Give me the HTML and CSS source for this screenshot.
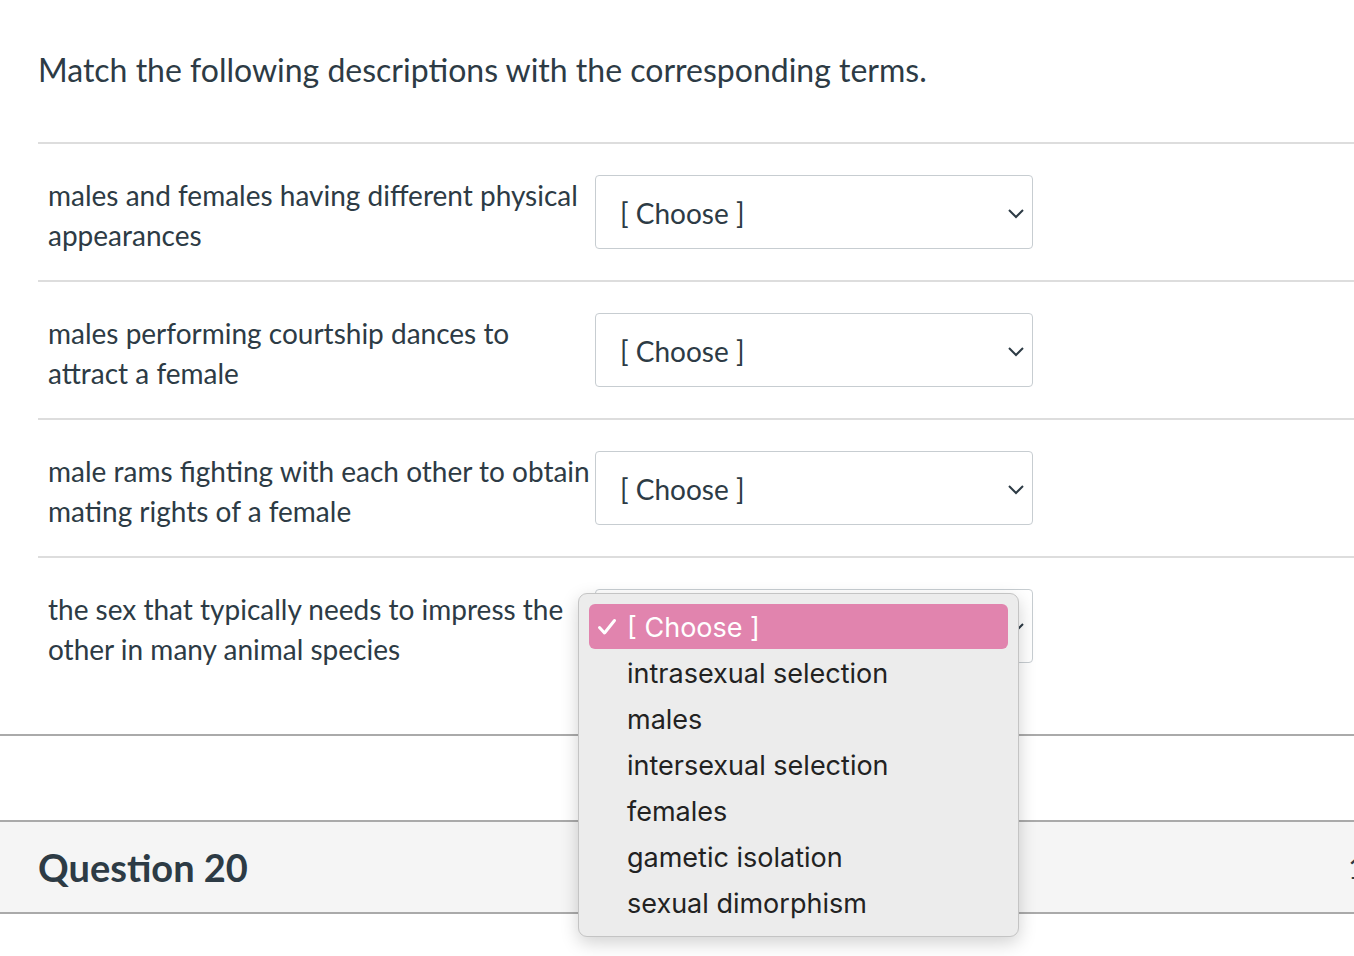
FILE: index.html
```html
<!DOCTYPE html>
<html lang="en">
<head>
    <meta charset="UTF-8">
    <title>Quiz</title>
    <link rel="stylesheet" href="styles.css">
</head>
<body>
    <div class="page">
        <div class="question">
            <p class="question-text">Match the following descriptions with the corresponding terms.</p>
            <div class="answers">
                <div class="answer">
                    <div class="answer-label">males and females having different physical appearances</div>
                    <div class="select">
                        <span>[ Choose ]</span>
                        <svg class="chevron" width="18" height="12" viewBox="0 0 18 12"><polyline points="2,3 9,10 16,3" fill="none" stroke="#2d3b45" stroke-width="2"/></svg>
                    </div>
                </div>
                <div class="answer">
                    <div class="answer-label">males performing courtship dances to attract a female</div>
                    <div class="select">
                        <span>[ Choose ]</span>
                        <svg class="chevron" width="18" height="12" viewBox="0 0 18 12"><polyline points="2,3 9,10 16,3" fill="none" stroke="#2d3b45" stroke-width="2"/></svg>
                    </div>
                </div>
                <div class="answer">
                    <div class="answer-label">male rams fighting with each other to obtain mating rights of a female</div>
                    <div class="select">
                        <span>[ Choose ]</span>
                        <svg class="chevron" width="18" height="12" viewBox="0 0 18 12"><polyline points="2,3 9,10 16,3" fill="none" stroke="#2d3b45" stroke-width="2"/></svg>
                    </div>
                </div>
                <div class="answer last">
                    <div class="answer-label">the sex that typically needs to impress the other in many animal species</div>
                    <div class="select">
                        <span>[ Choose ]</span>
                        <svg class="chevron" width="18" height="12" viewBox="0 0 18 12"><polyline points="2,3 9,10 16,3" fill="none" stroke="#2d3b45" stroke-width="2"/></svg>
                    </div>
                </div>
            </div>
        </div>

        <div class="spacer"></div>

        <div class="question-header">
            <h2>Question 20</h2>
            <span class="points">1 pts</span>
        </div>

        <ul class="dropdown">
            <li class="selected">
                <svg class="check" width="20" height="20" viewBox="0 0 20 20"><polyline points="2.5,10.5 7.5,16 17.5,3.5" fill="none" stroke="#fff" stroke-width="3" stroke-linecap="round" stroke-linejoin="round"/></svg>
                [ Choose ]
            </li>
            <li>intrasexual selection</li>
            <li>males</li>
            <li>intersexual selection</li>
            <li>females</li>
            <li>gametic isolation</li>
            <li>sexual dimorphism</li>
        </ul>
    </div>
</body>
</html>
```

FILE: styles.css
```css
html, body {
    margin: 0;
    padding: 0;
    background: #fff;
    overflow: hidden;
}
body {
    font-family: Lato, "Liberation Sans", sans-serif;
    color: #2d3b45;
}
.page {
    position: relative;
    height: 956px;
}
.question {
    padding-top: 50px;
    border-bottom: 2px solid #aaa;
}
.question-text {
    margin: 0 0 52px 38px;
    font-size: 32px;
    line-height: 40px;
}
.answers {
    margin-left: 38px;
    border-top: 2px solid #ddd;
    padding-bottom: 40px;
}
.answer {
    display: flex;
    align-items: flex-start;
    height: 136px;
    border-bottom: 2px solid #ddd;
}
.answer.last {
    border-bottom: none;
}
.answer-label {
    width: 547px;
    padding: 31px 0 0 10px;
    font-size: 28px;
    line-height: 40px;
}
.select {
    display: flex;
    align-items: center;
    justify-content: space-between;
    box-sizing: border-box;
    width: 438px;
    height: 74px;
    margin-top: 31px;
    padding: 1px 7px 0 24px;
    border: 1px solid #c7cdd1;
    border-radius: 4px;
    font-size: 28px;
}
.spacer {
    height: 84px;
}
.question-header {
    display: flex;
    align-items: center;
    justify-content: space-between;
    height: 90px;
    padding-left: 38px;
    margin-right: -50px;
    background: #f5f5f5;
    border-top: 2px solid #aaa;
    border-bottom: 2px solid #aaa;
}
.question-header h2 {
    margin: 0;
    font-size: 38px;
    font-weight: 700;
}
.points {
    width: 56px;
    white-space: nowrap;
    font-size: 30px;
}
.dropdown {
    position: absolute;
    left: 578px;
    top: 593px;
    box-sizing: border-box;
    width: 441px;
    height: 344px;
    margin: 0;
    padding: 10px 10px 0;
    list-style: none;
    background: #ececec;
    border: 1px solid #c4c4c4;
    border-radius: 9px;
    box-shadow: 0 6px 18px rgba(0,0,0,0.18);
    font-family: Inter, "Liberation Sans", sans-serif;
    font-size: 27px;
    color: #222;
}
.dropdown li {
    height: 46px;
    line-height: 48px;
    padding-left: 38px;
}
.dropdown li.selected {
    position: relative;
    height: 45px;
    margin-bottom: 1px;
    background: #e184ae;
    border-radius: 6px;
    color: #fff;
}
.check {
    position: absolute;
    left: 8px;
    top: 13px;
}
```
